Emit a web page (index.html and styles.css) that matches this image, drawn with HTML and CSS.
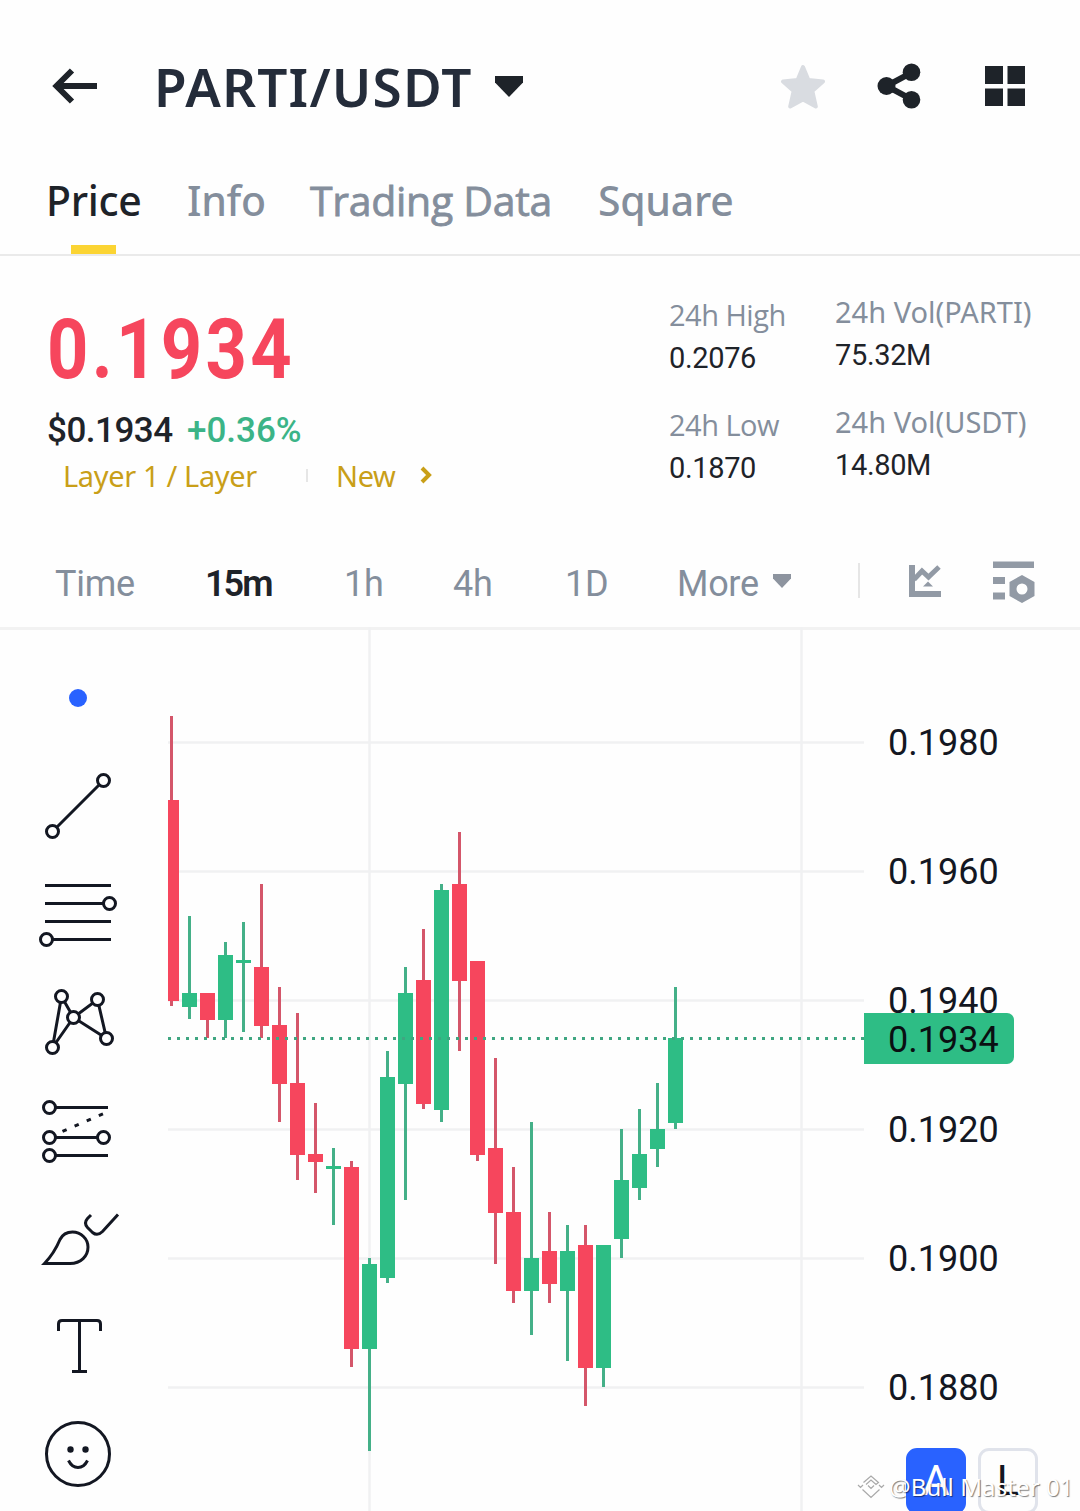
FILE: index.html
```html
<!DOCTYPE html>
<html lang="en">
<head>
    <meta charset="UTF-8">
    <meta name="viewport" content="width=device-width, initial-scale=1.0">
    <title>PARTI/USDT</title>
    <link rel="stylesheet" href="styles.css">
</head>
<body>
    <header class="header">
        <svg class="icon-back" width="46" height="36" viewBox="0 0 46 36">
            <path d="M20 2.5L4.5 18L20 33.5M4.5 18H45" fill="none" stroke="#1e2329" stroke-width="6"/>
        </svg>
        <h1>PARTI/USDT</h1>
        <svg class="caret" width="28" height="21" viewBox="0 0 28 21">
            <path d="M0 0H28V6.5L14 21L0 6.5Z" fill="#1e2329"/>
        </svg>
        <div class="header-actions">
            <svg width="46" height="46" viewBox="0 0 46 46">
                <path d="M23 4L28.4 17L43 18.5L32.3 28L35.8 43.5L23 36.5L10.2 43.5L13.7 28L3 18.5L17.6 17Z" fill="#d9dce1" stroke="#d9dce1" stroke-width="4" stroke-linejoin="round"/>
            </svg>
            <svg width="44" height="46" viewBox="0 0 44 46">
                <path d="M35 9.3L9.5 23L35 36.7" fill="none" stroke="#1e2329" stroke-width="6"/>
                <g fill="#1e2329">
                    <circle cx="9.5" cy="23" r="9"/>
                    <circle cx="34.5" cy="9.3" r="8.8"/>
                    <circle cx="34.5" cy="36.7" r="8.8"/>
                </g>
            </svg>
            <svg width="40" height="40" viewBox="0 0 40 40" fill="#1e2329">
                <path d="M0 0H18V18H0ZM22.5 0H40V18H22.5ZM0 22.5H18V40H0ZM22.5 22.5H40V40H22.5Z"/>
            </svg>
        </div>
    </header>

    <nav class="tabs">
        <a class="tab active">Price</a>
        <a class="tab info">Info</a>
        <a class="tab trading">Trading Data</a>
        <a class="tab square">Square</a>
    </nav>

    <section class="summary">
        <div class="quote">
            <div class="last-price">0.1934</div>
            <div class="change"><span class="fiat">$0.1934</span><span class="up">+0.36%</span></div>
            <div class="tags">
                <span class="tag-layer">Layer 1 / Layer</span>
                <i class="tag-line"></i>
                <span class="tag-new">New</span>
                <svg width="12" height="18" viewBox="0 0 12 18">
                    <path d="M2 2L9 9L2 16" fill="none" stroke="#c99f18" stroke-width="4"/>
                </svg>
            </div>
        </div>
        <div class="stats">
            <div class="stat"><span class="label narrow">24h High</span><span class="value">0.2076</span></div>
            <div class="stat"><span class="label narrow">24h Low</span><span class="value">0.1870</span></div>
        </div>
        <div class="stats volume">
            <div class="stat"><span class="label">24h Vol(PARTI)</span><span class="value">75.32M</span></div>
            <div class="stat"><span class="label">24h Vol(USDT)</span><span class="value">14.80M</span></div>
        </div>
    </section>

    <nav class="intervals">
        <span>Time</span>
        <span class="selected">15m</span>
        <span>1h</span>
        <span>4h</span>
        <span>1D</span>
        <span class="more">More
            <svg width="18" height="14" viewBox="0 0 18 14"><path d="M0 0H18V4.5L9 14L0 4.5Z" fill="#8d949f"/></svg>
        </span>
        <i class="divider"></i>
        <svg class="style" width="34" height="34" viewBox="0 0 34 34">
            <path d="M4 1V30H33" fill="none" stroke="#929aa5" stroke-width="6"/>
            <path d="M6 15.5L14 7L20.5 13L31 3" fill="none" stroke="#929aa5" stroke-width="5"/>
            <path d="M15 22.5L20 17.5L25 22.5Z" fill="#929aa5"/>
        </svg>
        <svg class="settings" width="42" height="42" viewBox="0 0 42 42" fill="#929aa5">
            <path d="M0 0.5H41V7H0ZM0 16H12V23H0ZM0 31.5H12V38.5H0Z"/>
            <path fill-rule="evenodd" d="M29 14L41.5 21V35L29 42L16.5 35V21ZM29 22.5A5.5 5.5 0 1 0 29 33.5A5.5 5.5 0 1 0 29 22.5Z"/>
        </svg>
    </nav>

    <main class="chart">
        <aside class="tools">
            <i class="dot"></i>
            <svg viewBox="0 0 84 84">
                <path d="M21 63L63 21"/>
                <circle cx="16.5" cy="67.5" r="6"/><circle cx="67.5" cy="16.5" r="6"/>
            </svg>
            <svg viewBox="0 0 84 84">
                <path d="M9 13.5H75M9 31.5H67M9 49.5H75M17 67.5H75"/>
                <circle cx="73.5" cy="31.5" r="6"/><circle cx="10.5" cy="67.5" r="6"/>
            </svg>
            <svg viewBox="0 0 84 84">
                <path d="M16.5 67.5L25.5 16.5L37.5 37.5L16.5 67.5M37.5 37.5L61.5 19.5L70.5 58.5Z"/>
                <circle cx="25.5" cy="16.5" r="6"/><circle cx="61.5" cy="19.5" r="6"/><circle cx="37.5" cy="37.5" r="6"/>
                <circle cx="16.5" cy="67.5" r="6"/><circle cx="70.5" cy="58.5" r="6"/>
            </svg>
            <svg viewBox="0 0 84 84">
                <path d="M19 19.5H72M19 49.5H62M19 67.5H72"/>
                <path d="M26.5 43.3L68 25.3" stroke-dasharray="4.5 8.7"/>
                <circle cx="13.5" cy="19.5" r="6"/><circle cx="13.5" cy="49.5" r="6"/>
                <circle cx="13.5" cy="67.5" r="6"/><circle cx="67.5" cy="49.5" r="6"/>
            </svg>
            <svg viewBox="0 0 84 84">
                <path d="M8.5 67.5H34C45 67.5 52 60 52 51C52 43 45 36 36.5 36C30 36 26 39.5 24 43.5C20 53 16.5 59 8.5 67.5Z"/>
                <path d="M55 19L51.5 22.5Q47.5 27 51.5 31.5L56.5 36.5Q61.5 40.5 66.5 35.5L82 18.5"/>
            </svg>
            <svg viewBox="0 0 84 84">
                <path d="M22.5 27V20Q22.5 16.5 26 16.5H61Q64.5 16.5 64.5 20V27M43.5 16.5V67.5M36 67.5H51"/>
            </svg>
            <svg viewBox="0 0 84 84">
                <circle cx="42" cy="42" r="31.5"/>
                <circle class="eye" cx="34.5" cy="37.5" r="3.2"/><circle class="eye" cx="49.5" cy="37.5" r="3.2"/>
                <path d="M32.5 48.5Q36 55.5 42 55.5Q48 55.5 51.5 48.5"/>
            </svg>
        </aside>

        <svg class="plot" id="plot" viewBox="168 630 696 881" width="696" height="881"></svg>

        <div class="axis">
            <span>0.1980</span>
            <span>0.1960</span>
            <span>0.1940</span>
            <span>0.1920</span>
            <span>0.1900</span>
            <span>0.1880</span>
            <div class="scale-buttons">
                <button class="scale auto">A</button>
                <button class="scale">L</button>
            </div>
            <div class="price-tag">0.1934</div>
        </div>
    </main>

    <div class="watermark">
        <svg width="28" height="24" viewBox="0 0 28 24">
            <g fill="none" stroke="#a9a9a9" stroke-width="1.2">
                <path d="M6.5 7.5L14 1L21.5 7.5L19 9.5L14 5L9 9.5M1 10L3.5 12.5L6 10M22 10L24.5 12.5L27 10M11 10.5L14 13.5L17 10.5M5.5 14.5L14 22.5L22.5 14.5"/>
            </g>
        </svg>
        <span>@Bull Master 01</span>
    </div>

    <script src="script.js"></script>
</body>
</html>
```
FILE: styles.css
```css
* {
    margin: 0;
    padding: 0;
    box-sizing: border-box;
}

body {
    position: relative;
    width: 1080px;
    height: 1511px;
    overflow: hidden;
    background: #fefefe;
    color: #1e2329;
    font-family: Roboto, sans-serif;
}

svg {
    display: block;
    flex-shrink: 0;
}

/* header */
.header {
    display: flex;
    align-items: center;
    height: 172px;
    padding: 0 55px 0 52px;
}

h1 {
    width: 341px;
    margin-left: 56px;
    margin-top: 1px;
    font-family: "Noto Sans", sans-serif;
    font-size: 53px;
    font-weight: 600;
    letter-spacing: 1.2px;
    white-space: nowrap;
    color: #242c3a;
}

.header-actions {
    display: flex;
    align-items: center;
    margin-left: auto;
}

.header-actions svg + svg {
    margin-left: 51px;
}

.header-actions svg:last-child {
    margin-left: 64px;
}

/* tabs */
.tabs {
    display: grid;
    grid-template-columns: 141px 123px 288px 200px;
    height: 84px;
    padding-left: 46px;
    border-bottom: 2px solid #eaeaea;
    font-family: "Noto Sans", sans-serif;
    font-size: 41px;
    font-weight: 500;
    line-height: 56px;
    letter-spacing: -0.3px;
    color: #848e9c;
    white-space: nowrap;
}

.tab.active {
    position: relative;
    color: #1e2329;
}

.tab.active::after {
    content: '';
    position: absolute;
    left: 25px;
    bottom: 0;
    width: 45px;
    height: 9px;
    background: #fbd433;
}

.trading {
    font-family: "Open Sans", sans-serif;
    font-weight: 400;
    -webkit-text-stroke: 0.8px #848e9c;
}

/* price summary */
.summary {
    display: flex;
    height: 284px;
    padding: 40px 0 0 47px;
}

.quote {
    width: 622px;
}

.last-price {
    height: 108px;
    font-size: 83px;
    font-weight: 700;
    line-height: 108px;
    letter-spacing: 3.8px;
    color: #f6465d;
    transform: scaleX(0.87);
    transform-origin: left;
}

.change {
    height: 52px;
    font-size: 35px;
    font-weight: 500;
    line-height: 54px;
}

.fiat {
    display: inline-block;
    width: 140px;
    letter-spacing: -0.5px;
}

.up {
    color: #3bb487;
}

.tags {
    display: flex;
    align-items: center;
    height: 38px;
    padding-left: 16px;
    font-family: "Noto Sans", sans-serif;
    font-size: 29px;
    letter-spacing: -0.35px;
    color: #c99f18;
    white-space: nowrap;
}

.tag-layer {
    width: 243px;
}

.tag-line {
    width: 2px;
    height: 13px;
    margin-right: 28px;
    background: #e6e6e6;
}

.tag-new {
    width: 84px;
}

.stats {
    width: 166px;
    margin-top: -1px;
}

.stats.volume {
    width: 220px;
    margin-top: -4px;
}

.stat {
    display: flex;
    flex-direction: column;
    height: 110px;
    white-space: nowrap;
}

.label {
    font-family: "Noto Sans", sans-serif;
    font-size: 29px;
    line-height: 40px;
    color: #848e9c;
}

.label.narrow {
    font-family: "Open Sans", sans-serif;
    letter-spacing: -0.5px;
}

.value {
    font-size: 29px;
    line-height: 47px;
    letter-spacing: -0.35px;
}

/* interval bar */
.intervals {
    display: grid;
    grid-template-columns: 150px 139px 109px 112px 112px 181px 50px 84px 50px;
    align-items: center;
    height: 90px;
    padding-left: 55px;
    border-bottom: 3px solid #f2f2f2;
    font-size: 36px;
    letter-spacing: -0.3px;
    color: #848e9c;
}

.selected {
    font-weight: 600;
    letter-spacing: -2px;
    color: #1e2329;
}

.more {
    display: flex;
    align-items: center;
    gap: 14px;
}

.more svg {
    margin-bottom: 6px;
}

.divider {
    width: 2px;
    height: 35px;
    margin-bottom: 6px;
    background: #e6e6e6;
}

.style {
    margin-bottom: 5px;
}

.settings {
    margin: 0 0 4px 1px;
}

/* chart */
.chart {
    display: flex;
    height: 881px;
}

.tools {
    display: flex;
    flex-direction: column;
    gap: 24px;
    width: 168px;
    padding: 59px 0 0 36px;
}

.tools svg {
    width: 84px;
    height: 84px;
    fill: none;
    stroke: #131722;
    stroke-width: 3;
}

.tools svg circle {
    fill: #fefefe;
}

.tools svg circle.eye {
    fill: #131722;
    stroke: none;
}

.dot {
    flex-shrink: 0;
    width: 18px;
    height: 18px;
    margin: 0 0 33px 33px;
    border-radius: 50%;
    background: #2962ff;
}

.plot {
    overflow: visible;
}

.grid-line {
    stroke: #f0f1f2;
    stroke-width: 2.5;
}

.up-body {
    fill: #2ebd85;
}

.up-wick {
    fill: #44b088;
}

.down-body {
    fill: #f6465d;
}

.down-wick {
    fill: #d4566a;
}

.price-line {
    stroke: #3fa681;
    stroke-width: 3;
    stroke-dasharray: 3 6;
}

.axis {
    position: relative;
    width: 216px;
    padding-top: 48px;
    font-size: 36px;
    color: #131722;
}

.axis > span {
    display: block;
    height: 129px;
    padding-left: 24px;
    line-height: 130px;
}

.price-tag {
    position: absolute;
    left: 0;
    top: 383px;
    width: 150px;
    height: 51px;
    padding-left: 24px;
    border-radius: 0 7px 7px 0;
    background: #2ebd85;
    color: #0a0f12;
    line-height: 54px;
}

.scale-buttons {
    display: flex;
    gap: 12px;
    margin: -4px 0 0 42px;
}

.scale {
    width: 60px;
    height: 66px;
    border: 3px solid #e0e3eb;
    border-radius: 11px;
    background: #fefefe;
    color: #131722;
    font: 42px/58px Roboto, sans-serif;
}

.scale.auto {
    border-color: #2962ff;
    background: #2962ff;
    color: #fff;
}

.watermark {
    position: absolute;
    left: 857px;
    top: 1470px;
    display: flex;
    align-items: center;
    gap: 4px;
    color: #fff;
    font: 24px/34px "Noto Sans", sans-serif;
    letter-spacing: 0.1px;
    text-shadow: 1px 1px 1px rgba(0, 0, 0, 0.5);
    white-space: nowrap;
}
```
FILE: script.js
```js
// [direction, wick top, body top, body bottom, wick bottom]
const candles = [
    ['down', 716, 800, 1001, 1006],
    ['up', 916, 993, 1007, 1019],
    ['down', 993, 993, 1020, 1038],
    ['up', 942, 955, 1020, 1038],
    ['up', 922, 960, 963, 1032],
    ['down', 884, 967, 1026, 1038],
    ['down', 987, 1025, 1084, 1122],
    ['down', 1013, 1083, 1155, 1180],
    ['down', 1103, 1154, 1162, 1193],
    ['up', 1148, 1166, 1169, 1225],
    ['down', 1161, 1167, 1349, 1367],
    ['up', 1258, 1264, 1349, 1451],
    ['up', 1051, 1077, 1278, 1283],
    ['up', 967, 993, 1084, 1200],
    ['down', 929, 980, 1104, 1109],
    ['up', 884, 890, 1110, 1122],
    ['down', 832, 884, 981, 1051],
    ['down', 961, 961, 1155, 1161],
    ['down', 1058, 1148, 1213, 1264],
    ['down', 1167, 1212, 1291, 1303],
    ['up', 1122, 1258, 1291, 1335],
    ['down', 1212, 1251, 1284, 1303],
    ['up', 1225, 1251, 1291, 1361],
    ['down', 1225, 1245, 1368, 1406],
    ['up', 1245, 1245, 1368, 1387],
    ['up', 1129, 1180, 1239, 1258],
    ['up', 1109, 1154, 1188, 1200],
    ['up', 1083, 1129, 1149, 1167],
    ['up', 987, 1038, 1123, 1129]
];

const plot = document.getElementById('plot');

function add(tag, cls, attrs) {
    const el = document.createElementNS('http://www.w3.org/2000/svg', tag);
    el.setAttribute('class', cls);
    for (const key in attrs) el.setAttribute(key, attrs[key]);
    plot.appendChild(el);
}

// grid
[742.5, 871.5, 1000.5, 1129.5, 1258.5, 1387.5].forEach(y => {
    add('line', 'grid-line', { x1: 168, x2: 864, y1: y, y2: y });
});
[369.5, 801.5].forEach(x => {
    add('line', 'grid-line', { x1: x, x2: x, y1: 627, y2: 1511 });
});

candles.forEach(([dir, high, top, bottom, low], i) => {
    const x = 164 + i * 18;
    // the first candle is cut by the left edge of the plot
    const left = Math.max(x, 168);
    add('rect', dir + '-wick', { x: x + 6, y: high, width: 3, height: low - high });
    add('rect', dir + '-body', { x: left, y: top, width: x + 15 - left, height: bottom - top });
});

add('line', 'price-line', { x1: 168, x2: 864, y1: 1038.5, y2: 1038.5 });
```
